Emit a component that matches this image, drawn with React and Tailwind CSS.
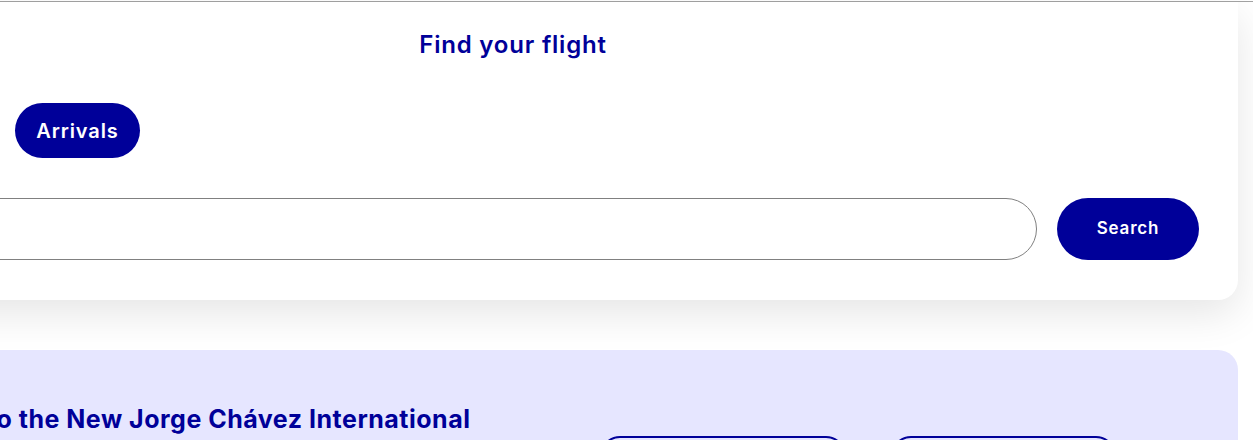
import React from "react";

const font = { fontFamily: "Inter, 'Noto Sans', sans-serif" };

const FlightSearch = () => (
  <div className="w-[1450px] -ml-[212px] bg-white rounded-b-[20px] shadow-[0_14px_40px_rgba(0,0,0,0.10)] px-[39px] pt-[27px] pb-[40px]">
    <h2 className="text-center text-[24px] leading-[32px] font-semibold tracking-[0.8px] text-[#000099]">
      Find your flight
    </h2>
    {/* Tabs */}
    <div className="mt-[42px] flex gap-[20px] pl-[1px]">
      <button className="shrink-0 w-[167px] h-[55px] rounded-full border-2 border-[#000099] text-[20px] font-semibold text-[#000099]">
        Departures
      </button>
      <button className="shrink-0 w-[125px] h-[55px] rounded-full bg-[#000099] text-[20px] font-semibold tracking-[0.9px] text-white">
        Arrivals
      </button>
    </div>
    {/* Search row */}
    <div className="mt-[40px] flex gap-[20px]">
      <input
        type="text"
        className="flex-1 h-[62px] rounded-full border border-[#808080] px-6 outline-none"
      />
      <button className="shrink-0 w-[142px] h-[62px] rounded-full bg-[#000099] text-[17px] font-semibold tracking-[0.8px] text-white">
        Search
      </button>
    </div>
  </div>
);

const Welcome = () => (
  <div className="mt-[50px] w-[1450px] -ml-[212px] bg-[#e6e6ff] rounded-t-[20px] flex">
    <div className="shrink-0 w-[812px] pl-[75px] pt-[53px]">
      <h3 className="text-[25px] leading-[32px] font-bold tracking-[0.5px] text-[#000099] whitespace-nowrap">
        Welcome to the New Jorge Chávez International
      </h3>
      <h3 className="text-[25px] leading-[32px] font-bold tracking-[0.5px] text-[#000099]">Airport</h3>
    </div>
    <div className="flex gap-[45px] pt-[86px]">
      <button className="shrink-0 w-[246px] h-[50px] rounded-[20px] border-2 border-[#000099] text-[16px] font-semibold text-[#000099]">
        Passengers
      </button>
      <button className="shrink-0 w-[225px] h-[50px] rounded-[20px] border-2 border-[#000099] text-[16px] font-semibold text-[#000099]">
        Airlines
      </button>
    </div>
  </div>
);

export default function App() {
  return (
    <div className="w-full h-[440px] overflow-hidden bg-white" style={font}>
      <div className="h-[1px] bg-white" />
      <div className="h-[1px] bg-[#a3a3a3]" />
      <FlightSearch />
      <Welcome />
    </div>
  );
}
